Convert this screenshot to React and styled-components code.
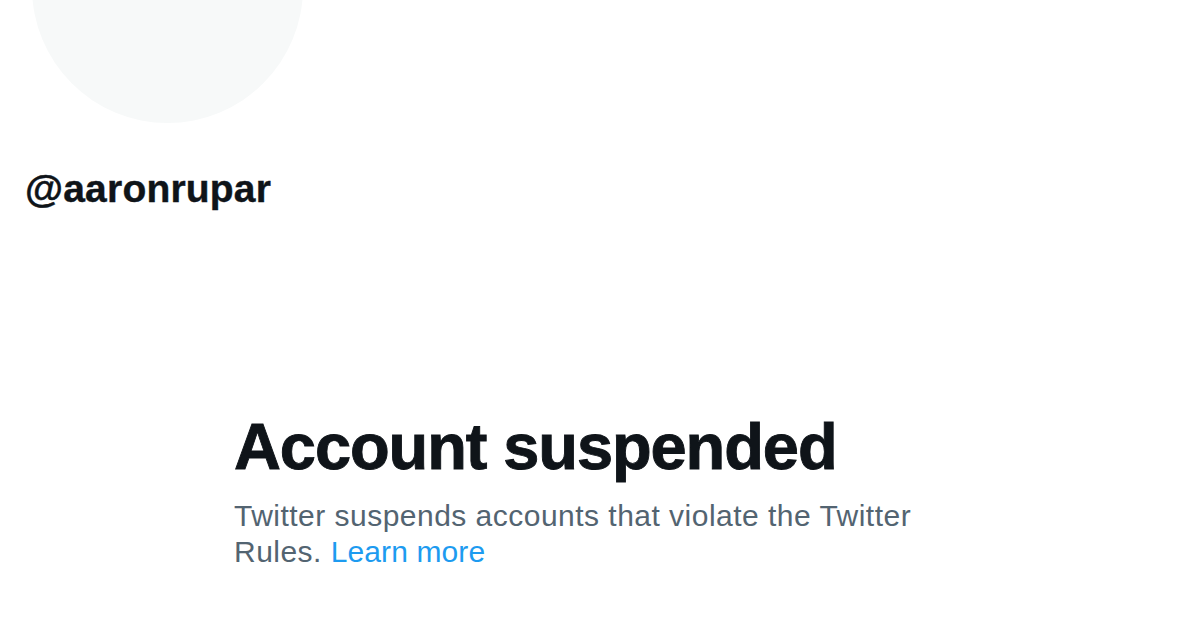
import React from "react";
import styled, { createGlobalStyle } from "styled-components";

const Global = createGlobalStyle`
  html, body { margin: 0; padding: 0; background: #ffffff; }
  body { font-family: "Liberation Sans", Arial, sans-serif; overflow: hidden; }
`;

const Page = styled.div`
  width: 1199px;
  height: 630px;
  overflow: hidden;
  display: flex;
  flex-direction: column;
  padding-left: 25px;
  box-sizing: border-box;
`;

const Avatar = styled.div`
  width: 271px;
  height: 271px;
  border-radius: 50%;
  background: #f7f9f9;
  margin-top: -148px;
  margin-left: 7px;
  flex-shrink: 0;
`;

const Handle = styled.div`
  margin-top: 42px;
  font-size: 39px;
  font-weight: 700;
  line-height: 48px;
  color: #0f1419;
  letter-spacing: 0.2px;
  -webkit-text-stroke: 0.4px #0f1419;
`;

const Notice = styled.div`
  margin-top: 194px;
  margin-left: 209px;
  width: 700px;
  display: flex;
  flex-direction: column;
`;

const Title = styled.h1`
  margin: 0;
  font-size: 65px;
  font-weight: 700;
  line-height: 80px;
  color: #0f1419;
  letter-spacing: -1.1px;
  -webkit-text-stroke: 0.9px #0f1419;
`;

const Body = styled.p`
  margin: 11px 0 0;
  font-size: 30px;
  line-height: 36px;
  color: #536471;
  letter-spacing: 0.48px;
`;

const Link = styled.a`
  color: #1d9bf0;
  text-decoration: none;
  letter-spacing: 0.1px;
`;

export default function App() {
  return (
    <>
      <Global />
      <Page>
        <Avatar />
        <Handle>@aaronrupar</Handle>
        <Notice>
          <Title>Account suspended</Title>
          <Body>
            Twitter suspends accounts that violate the Twitter Rules.{" "}
            <Link href="#">Learn more</Link>
          </Body>
        </Notice>
      </Page>
    </>
  );
}
